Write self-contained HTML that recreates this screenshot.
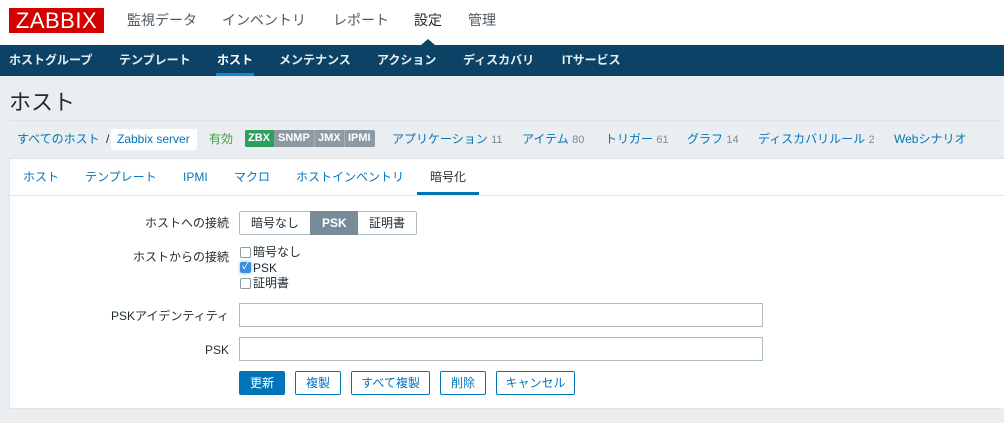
<!DOCTYPE html><html><head><meta charset="utf-8"><style>
*{margin:0;padding:0;box-sizing:border-box}
body{width:1004px;height:423px;background:#ebeef0;font-family:"Liberation Sans","Noto Sans CJK JP",sans-serif;font-size:12px;color:#1f2c33;position:relative;overflow:hidden}
.a{position:absolute;white-space:nowrap;line-height:14px}
.top{position:absolute;left:0;top:0;width:1004px;height:45px;background:#fff}
.nav{position:absolute;left:0;top:45px;width:1004px;height:31px;background:#0b4266}
.nav span{position:absolute;top:8px;color:#e5eef3;font-weight:bold;font-size:12px;line-height:14px}
.m{top:12px;font-size:14px;color:#4f5a61;line-height:16px}
.lk{color:#0275b8}
.cnt{color:#768d99;font-size:11px}
.panel{position:absolute;left:9px;top:158px;width:1000px;height:251px;background:#fff;border:1px solid #dfe4e7}
.lab{font-size:12px;color:#1f2c33;text-align:right;width:150px}
.inp{position:absolute;height:24px;border:1px solid #acbbc4;background:#fff}
.btn{position:absolute;top:371px;height:24px;border:1px solid #0275b8;border-radius:2px;color:#0275b8;font-size:12px;text-align:center;line-height:22px;background:#fff}
.cb{position:absolute;width:11px;height:11px;border:1px solid #8c9aa3;border-radius:2px;background:#fff}
.bd{position:absolute;top:131px;color:#fff;font-weight:bold;font-size:11px;line-height:14px}
</style></head><body>
<div class="top"></div>
<div class="a" style="left:9px;top:8px;width:95px;height:25px;background:#d40000;color:#fff;font-size:22px;line-height:25px;text-align:center;letter-spacing:0.5px">ZABBIX</div>
<span class="a m" style="left:127px">監視データ</span>
<span class="a m" style="left:222px">インベントリ</span>
<span class="a m" style="left:333px">レポート</span>
<span class="a m" style="left:414px;color:#1f2c33">設定</span>
<span class="a m" style="left:468px">管理</span>
<div class="a" style="left:421px;top:39px;width:0;height:0;border-left:7px solid transparent;border-right:7px solid transparent;border-bottom:6px solid #0b4266"></div>
<div class="nav">
<span style="left:9px">ホストグループ</span>
<span style="left:119px">テンプレート</span>
<span style="left:217px;color:#fff">ホスト</span>
<span style="left:279px">メンテナンス</span>
<span style="left:377px">アクション</span>
<span style="left:463px">ディスカバリ</span>
<span style="left:562px">ITサービス</span>
<div class="a" style="left:216px;top:28px;width:38px;height:3px;background:#0f88d5"></div>
</div>
<div class="a" style="left:9px;top:91px;font-size:22px;line-height:24px;color:#1f2c33">ホスト</div>
<div class="a" style="left:9px;top:120px;width:995px;height:1px;background:#dfe4e7"></div>
<span class="a lk" style="left:17px;top:132px">すべてのホスト</span>
<span class="a" style="left:106px;top:132px">/</span>
<div class="a" style="left:111px;top:129px;width:86px;height:21px;background:#fff;border-radius:2px"></div>
<span class="a lk" style="left:117px;top:132px">Zabbix server</span>
<span class="a" style="left:209px;top:132px;color:#429e47">有効</span>
<div class="a" style="left:245px;top:130px;width:130px;height:17px;background:#8c9aa3;border-radius:2px"></div>
<div class="a" style="left:245px;top:130px;width:29px;height:17px;background:#2f9f5e;border-radius:2px 0 0 2px"></div>
<span class="bd" style="left:248px">ZBX</span>
<span class="bd" style="left:278px">SNMP</span>
<span class="bd" style="left:318px">JMX</span>
<span class="bd" style="left:348px">IPMI</span>
<div class="a" style="left:314px;top:130px;width:1px;height:17px;background:#a7b2b8"></div>
<div class="a" style="left:344px;top:130px;width:1px;height:17px;background:#a7b2b8"></div>
<span class="a lk" style="left:392px;top:132px">アプリケーション <span class="cnt">11</span></span>
<span class="a lk" style="left:522px;top:132px">アイテム <span class="cnt">80</span></span>
<span class="a lk" style="left:605px;top:132px">トリガー <span class="cnt">61</span></span>
<span class="a lk" style="left:687px;top:132px">グラフ <span class="cnt">14</span></span>
<span class="a lk" style="left:758px;top:132px">ディスカバリルール <span class="cnt">2</span></span>
<span class="a lk" style="left:894px;top:132px">Webシナリオ</span>
<div class="panel"></div>
<div class="a" style="left:10px;top:195px;width:994px;height:1px;background:#dfe4e7"></div>
<span class="a lk" style="left:23px;top:170px">ホスト</span>
<span class="a lk" style="left:85px;top:170px">テンプレート</span>
<span class="a lk" style="left:183px;top:170px">IPMI</span>
<span class="a lk" style="left:234px;top:170px">マクロ</span>
<span class="a lk" style="left:296px;top:170px">ホストインベントリ</span>
<span class="a" style="left:430px;top:170px">暗号化</span>
<div class="a" style="left:417px;top:192px;width:62px;height:3px;background:#0275b8"></div>
<span class="a lab" style="left:79px;top:216px">ホストへの接続</span>
<div class="a" style="left:239px;top:211px;width:178px;height:24px;border:1px solid #acbbc4;border-radius:2px;background:#fff"></div>
<div class="a" style="left:310px;top:211px;width:48px;height:24px;background:#768d99"></div>
<span class="a" style="left:251px;top:216px">暗号なし</span>
<span class="a" style="left:322px;top:216px;color:#fff;font-weight:bold">PSK</span>
<span class="a" style="left:369px;top:216px">証明書</span>
<span class="a lab" style="left:79px;top:250px">ホストからの接続</span>
<div class="cb" style="left:240px;top:247px"></div>
<span class="a" style="left:253px;top:245px">暗号なし</span>
<div class="cb" style="left:240px;top:262px;background:#3b8fdc;border-color:#3b8fdc;box-shadow:0 0 3px #6aa9f0"></div>
<span class="a" style="left:240px;top:260px;color:#fff;font-size:10px;width:11px;text-align:center">✓</span>
<span class="a" style="left:253px;top:261px">PSK</span>
<div class="cb" style="left:240px;top:278px"></div>
<span class="a" style="left:253px;top:276px">証明書</span>
<span class="a lab" style="left:79px;top:309px">PSKアイデンティティ</span>
<div class="inp" style="left:239px;top:303px;width:524px"></div>
<span class="a lab" style="left:79px;top:343px">PSK</span>
<div class="inp" style="left:239px;top:337px;width:524px"></div>
<div class="btn" style="left:239px;width:46px;background:#0275b8;color:#fff">更新</div>
<div class="btn" style="left:295px;width:46px">複製</div>
<div class="btn" style="left:351px;width:79px">すべて複製</div>
<div class="btn" style="left:440px;width:46px">削除</div>
<div class="btn" style="left:496px;width:79px">キャンセル</div>
</body></html>
